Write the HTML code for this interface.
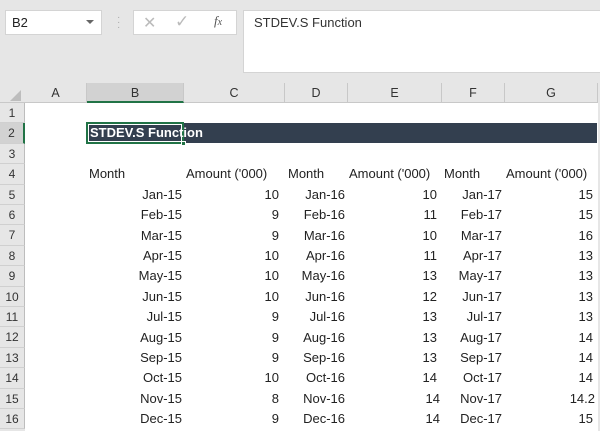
<!DOCTYPE html>
<html><head><meta charset="utf-8"><style>
*{margin:0;padding:0;box-sizing:border-box}
body{width:600px;height:431px;overflow:hidden;background:#fff;font-family:"Liberation Sans",sans-serif;position:relative;color:#222}
.a{position:absolute}
.top{left:0;top:0;width:600px;height:83px;background:#e6e6e6}
.box{background:#fff;border:1px solid #d4d4d4}
.hdr{top:83px;height:20px;background:#e6e6e6;border-bottom:1px solid #c8c8c8;font-size:12.5px;line-height:20px;text-align:center;color:#333}
.rh{left:0;width:25px;background:#e6e6e6;border-bottom:1px solid #d0d0d0;border-right:1px solid #bdbdbd;font-size:12px;text-align:center;color:#333}
.c{font-size:13px;white-space:nowrap;line-height:20px}
.r{text-align:right}
</style></head><body>
<div class="a top"></div>
<div class="a box" style="left:5px;top:10px;width:97px;height:25px;font-size:13px;line-height:23px;padding-left:6px">B2</div>
<div class="a" style="left:86px;top:20px;width:0;height:0;border-left:4px solid transparent;border-right:4px solid transparent;border-top:4px solid #666"></div>
<div class="a" style="left:117px;top:15px;color:#aaa;font-size:10px;line-height:5px">·<br>·<br>·</div>
<div class="a box" style="left:133px;top:10px;width:104px;height:25px"></div>
<div class="a" style="left:143px;top:13px;color:#bbb;font-size:16px">✕</div>
<div class="a" style="left:175px;top:12px;color:#bbb;font-size:17px">✓</div>
<div class="a" style="left:214px;top:13px;color:#555;font-size:13px;font-style:italic;font-family:'Liberation Serif',serif">f<span style="font-size:10px">x</span></div>
<div class="a box" style="left:243px;top:10px;width:360px;height:63px;font-size:13px;padding:4px 0 0 10px;color:#333">STDEV.S Function</div>

<div class="a hdr" style="left:0;width:600px"></div>
<div class="a" style="left:10px;top:90px;width:0;height:0;border-left:11px solid transparent;border-bottom:11px solid #bdbdbd"></div>
<div class="a hdr" style="left:25px;width:62px;border-right:1px solid #c8c8c8">A</div>
<div class="a hdr" style="left:87px;width:97px;background:#d2d2d2;border-right:1px solid #c8c8c8;border-bottom:2px solid #217346">B</div>
<div class="a hdr" style="left:184px;width:101px;border-right:1px solid #c8c8c8">C</div>
<div class="a hdr" style="left:285px;width:63px;border-right:1px solid #c8c8c8">D</div>
<div class="a hdr" style="left:348px;width:94px;border-right:1px solid #c8c8c8">E</div>
<div class="a hdr" style="left:442px;width:63px;border-right:1px solid #c8c8c8">F</div>
<div class="a hdr" style="left:505px;width:93px;border-right:1px solid #c8c8c8">G</div>

<div class="a" style="left:0;top:103px;width:25px;height:328px;background:#e6e6e6"></div>
<div class="a rh" style="top:103px;height:20.4px;line-height:20px">1</div>
<div class="a rh" style="top:123.4px;height:20.4px;line-height:20px;background:#d2d2d2;border-right:2px solid #217346">2</div>
<div class="a rh" style="top:143.8px;height:20.4px;line-height:20px">3</div>
<div class="a rh" style="top:164.2px;height:20.4px;line-height:20px">4</div>
<div class="a rh" style="top:184.6px;height:20.4px;line-height:20px">5</div>
<div class="a rh" style="top:205px;height:20.4px;line-height:20px">6</div>
<div class="a rh" style="top:225.4px;height:20.4px;line-height:20px">7</div>
<div class="a rh" style="top:245.8px;height:20.4px;line-height:20px">8</div>
<div class="a rh" style="top:266.2px;height:20.4px;line-height:20px">9</div>
<div class="a rh" style="top:286.6px;height:20.4px;line-height:20px">10</div>
<div class="a rh" style="top:307px;height:20.4px;line-height:20px">11</div>
<div class="a rh" style="top:327.4px;height:20.4px;line-height:20px">12</div>
<div class="a rh" style="top:347.8px;height:20.4px;line-height:20px">13</div>
<div class="a rh" style="top:368.2px;height:20.4px;line-height:20px">14</div>
<div class="a rh" style="top:388.6px;height:20.4px;line-height:20px">15</div>
<div class="a rh" style="top:409px;height:20.4px;line-height:20px">16</div>
<div class="a" style="left:598px;top:83px;width:2px;height:348px;background:#e6e6e6"></div>

<div class="a" style="left:87px;top:123px;width:510px;height:20px;background:#333f4f"></div>
<div class="a" style="left:86px;top:122px;width:98px;height:22px;border:2px solid #217346"></div>
<div class="a" style="left:88px;top:124px;width:94px;height:18px;border:1px solid #fff"></div>
<div class="a" style="left:181px;top:141px;width:5px;height:5px;background:#217346;border:1px solid #fff"></div>
<div class="a c" style="left:90px;top:123px;color:#fff;font-weight:bold;font-size:13px">STDEV.S Function</div>

<div class="a c" style="left:89px;top:164px">Month</div>
<div class="a c" style="left:186px;top:164px">Amount ('000)</div>
<div class="a c" style="left:288px;top:164px">Month</div>
<div class="a c" style="left:349px;top:164px">Amount ('000)</div>
<div class="a c" style="left:444px;top:164px">Month</div>
<div class="a c" style="left:506px;top:164px">Amount ('000)</div>

<div class="a" style="left:0;top:185px;width:600px">
<table style="position:absolute;left:0;top:0;border-collapse:collapse;font-size:13px" cellpadding="0">
<colgroup><col style="width:87px"><col style="width:95px"><col style="width:97px"><col style="width:66px"><col style="width:92px"><col style="width:65px"><col style="width:91px"></colgroup>
<tbody style="line-height:20.36px">
<tr><td></td><td class="r">Jan-15</td><td class="r">10</td><td class="r">Jan-16</td><td class="r">10</td><td class="r">Jan-17</td><td class="r">15</td></tr>
<tr><td></td><td class="r">Feb-15</td><td class="r">9</td><td class="r">Feb-16</td><td class="r">11</td><td class="r">Feb-17</td><td class="r">15</td></tr>
<tr><td></td><td class="r">Mar-15</td><td class="r">9</td><td class="r">Mar-16</td><td class="r">10</td><td class="r">Mar-17</td><td class="r">16</td></tr>
<tr><td></td><td class="r">Apr-15</td><td class="r">10</td><td class="r">Apr-16</td><td class="r">11</td><td class="r">Apr-17</td><td class="r">13</td></tr>
<tr><td></td><td class="r">May-15</td><td class="r">10</td><td class="r">May-16</td><td class="r">13</td><td class="r">May-17</td><td class="r">13</td></tr>
<tr><td></td><td class="r">Jun-15</td><td class="r">10</td><td class="r">Jun-16</td><td class="r">12</td><td class="r">Jun-17</td><td class="r">13</td></tr>
<tr><td></td><td class="r">Jul-15</td><td class="r">9</td><td class="r">Jul-16</td><td class="r">13</td><td class="r">Jul-17</td><td class="r">13</td></tr>
<tr><td></td><td class="r">Aug-15</td><td class="r">9</td><td class="r">Aug-16</td><td class="r">13</td><td class="r">Aug-17</td><td class="r">14</td></tr>
<tr><td></td><td class="r">Sep-15</td><td class="r">9</td><td class="r">Sep-16</td><td class="r">13</td><td class="r">Sep-17</td><td class="r">14</td></tr>
<tr><td></td><td class="r">Oct-15</td><td class="r">10</td><td class="r">Oct-16</td><td class="r">14</td><td class="r">Oct-17</td><td class="r">14</td></tr>
<tr><td></td><td class="r">Nov-15</td><td class="r">8</td><td class="r">Nov-16</td><td class="r"><span style="position:relative;left:3px">14</span></td><td class="r">Nov-17</td><td class="r"><span style="position:relative;left:2px">14.2</span></td></tr>
<tr><td></td><td class="r">Dec-15</td><td class="r">9</td><td class="r">Dec-16</td><td class="r"><span style="position:relative;left:3px">14</span></td><td class="r">Dec-17</td><td class="r">15</td></tr>
</tbody></table></div>
</body></html>
